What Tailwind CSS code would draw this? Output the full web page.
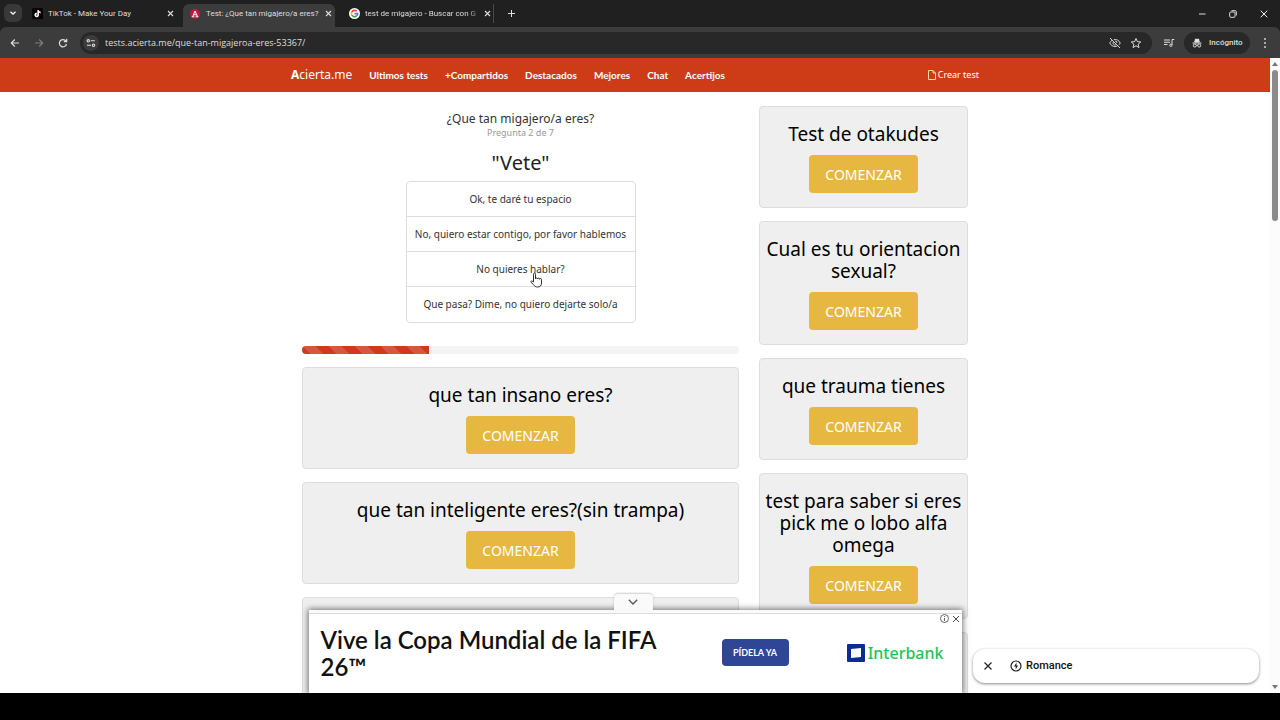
<!DOCTYPE html>
<html lang="es">
<head>
    <meta charset="UTF-8">
    <meta name="viewport" content="width=device-width, initial-scale=1.0">
    <title>Test: ¿Que tan migajero/a eres?</title>
    <script src="https://cdn.jsdelivr.net/npm/@tailwindcss/browser@4"></script>
</head>
<body class="h-screen flex flex-col overflow-hidden bg-black font-['Noto_Sans',sans-serif]">

    <!-- Browser window -->
    <header class="shrink-0 bg-[#202020] text-[#dedede] font-['Open_Sans',sans-serif]">
        <div class="flex h-[27px] pt-1 font-['Roboto',sans-serif] text-[8px]">
            <button aria-label="Buscar pestañas" class="ml-1 flex size-[18px] items-center justify-center rounded-md bg-[#393939]">
                <svg class="size-2" viewBox="0 0 8 8" fill="none" stroke="#fff" stroke-width="1.3"><path d="M1.5 2.8 4 5.2l2.5-2.4"/></svg>
            </button>
            <div class="ml-[3px] flex h-[19px] w-[158px] items-center pl-[7px]">
                <svg class="size-[11px] shrink-0" viewBox="0 0 22 22"><rect width="22" height="22" rx="3" fill="#000"/><g fill="none" stroke-width="2.6"><path d="M12 4v9.500a3 3 0 1 1-3-3M12 4c.4 2.800 2 4.200 4.500 4.500" stroke="#2ee"/><path d="M13 5v9.500a3 3 0 1 1-3-3M13 5c.4 2.800 2 4.200 4.500 4.500" stroke="#f25"/><path d="M12.500 4.500v9.500a3 3 0 1 1-3-3M12.500 4.500c.4 2.800 2 4.200 4.500 4.500" stroke="#fff"/></g></svg>
                <span class="ml-[5px] grow truncate">TikTok - Make Your Day</span>
                <button aria-label="Cerrar pestaña" class="mr-[9px]"><svg class="size-[7px]" viewBox="0 0 7 7" stroke="#ddd" stroke-width="1.1"><path d="m1 1 5 5M6 1 1 6"/></svg></button>
            </div>
            <div class="flex h-[23px] w-[152px] items-center rounded-t-md bg-[#3c3c3c] pb-1 pl-[7px]">
                <svg class="size-[10px] shrink-0" viewBox="0 0 20 20"><circle cx="10" cy="10" r="10" fill="#c8173f"/><path d="M3.500 15.500h5M11 15.500h6M5.500 15 10 4l5 11M7.500 11.500h5.500" fill="none" stroke="#fff" stroke-width="2"/></svg>
                <span class="ml-[6px] grow whitespace-nowrap">Test: ¿Que tan migajero/a eres?</span>
                <button aria-label="Cerrar pestaña" class="mr-[3px]"><svg class="size-[7px]" viewBox="0 0 7 7" stroke="#ddd" stroke-width="1.1"><path d="m1 1 5 5M6 1 1 6"/></svg></button>
            </div>
            <div class="flex h-[19px] w-[159px] items-center border-r border-[#484848] pl-[14px]">
                <svg class="size-[11px] shrink-0" viewBox="0 0 22 22" fill="none" stroke-width="3.200"><circle cx="11" cy="11" r="11" fill="#fff"/><path d="M15.500 6.500A6.300 6.300 0 0 0 5.500 8" stroke="#ea4335"/><path d="M5.500 8a6.300 6.300 0 0 0 0 6" stroke="#fbbc05"/><path d="M5.500 14a6.300 6.300 0 0 0 9.500 2" stroke="#34a853"/><path d="M15 16a6.300 6.300 0 0 0 2.300-4.700H11" stroke="#4285f4"/></svg>
                <span class="ml-[5px] grow whitespace-nowrap mask-r-from-85%">test de migajero - Buscar con G</span>
                <button aria-label="Cerrar pestaña" class="mr-[2px]"><svg class="size-[7px]" viewBox="0 0 7 7" stroke="#ddd" stroke-width="1.1"><path d="m1 1 5 5M6 1 1 6"/></svg></button>
            </div>
            <button aria-label="Nueva pestaña" class="ml-3.5 flex h-[19px] items-center"><svg class="size-[7px]" viewBox="0 0 7 7" stroke="#ddd" stroke-width="1"><path d="M3.500 0v7M0 3.500h7"/></svg></button>
            <div class="ml-auto mr-3 flex h-[19px] items-center gap-[23px]">
                <button aria-label="Minimizar"><svg class="size-2" viewBox="0 0 8 8" stroke="#ddd"><path d="M1 4h6.500"/></svg></button>
                <button aria-label="Restaurar"><svg class="size-2" viewBox="0 0 8 8" fill="none" stroke="#ddd"><rect x=".7" y="2" width="5.300" height="5.300" rx="1"/><path d="M2.500.7h3.800a1 1 0 0 1 1 1v3.800"/></svg></button>
                <button aria-label="Cerrar"><svg class="size-2" viewBox="0 0 8 8" stroke="#eee"><path d="m.7.7 6.600 6.600M7.300.7.7 7.300"/></svg></button>
            </div>
        </div>

        <div class="flex h-[31px] items-center rounded-t-md bg-[#3c3c3c] text-[9px]">
            <button aria-label="Atrás" class="ml-2.5"><svg class="size-[10px]" viewBox="0 0 10 10" fill="none" stroke="#ddd" stroke-width="1.2"><path d="M9 5H1.500M4.800 1.500 1.300 5l3.500 3.500"/></svg></button>
            <button aria-label="Adelante" class="ml-3.5"><svg class="size-[10px]" viewBox="0 0 10 10" fill="none" stroke="#7d7d7d" stroke-width="1.2"><path d="M1 5h7.500M5.200 1.500 8.700 5 5.200 8.500"/></svg></button>
            <button aria-label="Recargar" class="ml-3.5"><svg class="size-[10px]" viewBox="0 0 10 10" fill="none" stroke="#ddd" stroke-width="1.200"><path d="M8.500 6A3.600 3.600 0 1 1 8 3.200M8.700.8v2.900H5.800"/></svg></button>
            <div class="ml-3 flex h-[22px] grow items-center rounded-full bg-[#282828]">
                <button aria-label="Información del sitio" class="ml-[3px] flex size-4 items-center justify-center rounded-full bg-[#3c3c3c]">
                    <svg class="size-[10px]" viewBox="0 0 10 10" fill="none" stroke="#ddd" stroke-width="1.100"><circle cx="2.300" cy="2.800" r="1.200"/><path d="M4.800 2.800h4M1 7.200h4"/><circle cx="7.500" cy="7.200" r="1.200"/></svg>
                </button>
                <input type="text" aria-label="Dirección" value="tests.acierta.me/que-tan-migajeroa-eres-53367/" class="ml-1.5 grow bg-transparent outline-none">
                <svg class="size-3" viewBox="0 0 24 24" fill="none" stroke="#d5d5d5" stroke-width="2"><path d="M2 2l20 20M6 6.500C4 8 2.500 10 1.500 12c2 4.300 6 7 10.500 7 1.800 0 3.500-.4 5-1.200M9.500 5.300C14.500 4 20 6.500 22.500 12c-.6 1.300-1.400 2.500-2.400 3.500M8.500 10a4 4 0 0 0 5.300 5.500M12 8a4 4 0 0 1 4 4"/></svg>
                <svg class="ml-[9px] mr-[10px] size-3" viewBox="0 0 24 24" fill="none" stroke="#ddd" stroke-width="2"><path d="m12 3 2.700 6.300 6.800.6-5.200 4.500 1.600 6.700L12 17.500l-5.900 3.600 1.600-6.700-5.200-4.500 6.800-.6z"/></svg>
            </div>
            <svg class="ml-[11px] size-3" viewBox="0 0 24 24" fill="none" stroke="#ddd" stroke-width="2"><path d="M2 6h12M2 10.500h12M2 15h7M22.500 5H18v11"/><circle cx="15.700" cy="16.500" r="2.300"/></svg>
            <button class="ml-[9px] flex h-[22px] w-[66px] items-center rounded-full bg-[#282828] pl-2 font-['Roboto',sans-serif] text-[8px] font-medium">
                <svg class="mr-[7px] size-[10px]" viewBox="0 0 20 20" stroke="#e5e5e5" stroke-width="2" fill="none"><path d="M5.500 8 7 2l3 1 3-1 1.500 6z" fill="#e5e5e5"/><path d="M1 10h18"/><circle cx="5.500" cy="15" r="3"/><circle cx="14.500" cy="15" r="3"/><path d="M8.500 14.500q1.500-1 3 0"/></svg>
                Incógnito
            </button>
            <button aria-label="Menú" class="ml-[13px] mr-[13px]"><svg class="h-2.5 w-1" viewBox="0 0 4 10" fill="#ddd"><circle cx="2" cy="1" r=".9"/><circle cx="2" cy="5" r=".9"/><circle cx="2" cy="9" r=".9"/></svg></button>
        </div>
    </header>

    <!-- Page -->
    <div class="flex min-h-0 grow bg-white">
        <div class="relative grow overflow-hidden">
            <nav class="h-[34px] bg-[#cd3c17] text-white">
                <div class="mx-auto flex h-full max-w-[688px] items-center gap-[17px] font-['Lato',sans-serif] text-[10px]">
                    <a href="#" class="font-['Noto_Sans',sans-serif] text-[12px]"><b>A</b>cierta.me</a>
                    <a href="#" class="font-bold">Ultimos tests</a>
                    <a href="#" class="font-bold">+Compartidos</a>
                    <a href="#" class="font-bold">Destacados</a>
                    <a href="#" class="font-bold">Mejores</a>
                    <a href="#" class="font-bold">Chat</a>
                    <a href="#" class="font-bold">Acertijos</a>
                    <a href="#" class="ml-auto flex items-center gap-0.5 font-['Noto_Sans',sans-serif] text-[9px]">
                        <svg class="h-[10px] w-2" viewBox="0 0 8 10" fill="none" stroke="#fbd9a0"><path d="M.5.500h4.500l2.500 2.500v6.500H.500zM5 .500v2.500h2.500"/></svg>
                        Crear test
                    </a>
                </div>
            </nav>

            <div class="mx-auto flex max-w-[666px] items-start gap-5 pt-[14px]">
                <main class="min-w-0 grow text-center">
                    <h2 class="pt-[5px] text-[12px] leading-4 text-[#333]">¿Que tan migajero/a eres?</h2>
                    <p class="text-[9px] leading-3 text-[#999]">Pregunta 2 de 7</p>
                    <h1 class="mt-3 text-[20px] leading-6 text-[#222]">"Vete"</h1>
                    <div class="mx-auto mt-1.5 w-[230px] divide-y divide-[#ddd] rounded border border-[#ddd] text-[10px] text-[#333]">
                        <button class="block h-[35px] w-full">Ok, te daré tu espacio</button>
                        <button class="block h-[35px] w-full">No, quiero estar contigo, por favor hablemos</button>
                        <button class="relative block h-[35px] w-full">
                            No quieres hablar?
                            <svg class="absolute left-[123px] top-[20px] h-4 w-3" viewBox="0 0 12 16" fill="#fff" stroke="#333" stroke-linejoin="round"><path d="M3.500 10V2.200a1 1 0 0 1 2 0V7a1 1 0 0 1 2 0 1 1 0 0 1 2 .3 1 1 0 0 1 2 .4V11c0 2.500-1.300 4-3.800 4-2.200 0-3.200-.8-4.200-2.400L1 10.200c-.5-1 .6-1.700 1.300-1z"/></svg>
                        </button>
                        <button class="block h-[35px] w-full">Que pasa? Dime, no quiero dejarte solo/a</button>
                    </div>
                    <div role="progressbar" aria-label="Progreso" aria-valuenow="29" class="mb-[13px] mt-[23px] h-2 overflow-hidden rounded bg-[#f4f4f4]">
                        <div class="h-full bg-[#cd3c17] bg-[linear-gradient(45deg,#ffffff26_25%,transparent_25%,transparent_50%,#ffffff26_50%,#ffffff26_75%,transparent_75%)] bg-size-[26px_26px]" style="width: 29%"></div>
                    </div>
                    <div class="flex flex-col gap-[13px]">
                        <section class="rounded border border-[#ddd] bg-[#efefef] pb-[14px] pt-4">
                            <h3 class="mb-[10px] text-[19px] leading-[22px]">que tan insano eres?</h3>
                            <button class="h-[38px] w-[109px] rounded bg-[#e6b842] text-[14px] text-white">COMENZAR</button>
                        </section>
                        <section class="rounded border border-[#ddd] bg-[#efefef] pb-[14px] pt-4">
                            <h3 class="mb-[10px] text-[19px] leading-[22px]">que tan inteligente eres?(sin trampa)</h3>
                            <button class="h-[38px] w-[109px] rounded bg-[#e6b842] text-[14px] text-white">COMENZAR</button>
                        </section>
                        <section class="h-[102px] rounded border border-[#ddd] bg-[#efefef]"></section>
                    </div>
                </main>

                <aside class="flex w-[209px] shrink-0 flex-col gap-[13px] text-center">
                    <section class="rounded border border-[#ddd] bg-[#efefef] pb-[14px] pt-4">
                        <h3 class="mb-[10px] text-[19px] leading-[22px]">Test de otakudes</h3>
                        <button class="h-[38px] w-[109px] rounded bg-[#e6b842] text-[14px] text-white">COMENZAR</button>
                    </section>
                    <section class="rounded border border-[#ddd] bg-[#efefef] pb-[14px] pt-4">
                        <h3 class="mb-[10px] text-[19px] leading-[22px]">Cual es tu orientacion sexual?</h3>
                        <button class="h-[38px] w-[109px] rounded bg-[#e6b842] text-[14px] text-white">COMENZAR</button>
                    </section>
                    <section class="rounded border border-[#ddd] bg-[#efefef] pb-[14px] pt-4">
                        <h3 class="mb-[10px] text-[19px] leading-[22px]">que trauma tienes</h3>
                        <button class="h-[38px] w-[109px] rounded bg-[#e6b842] text-[14px] text-white">COMENZAR</button>
                    </section>
                    <section class="rounded border border-[#ddd] bg-[#efefef] pb-[14px] pt-4">
                        <h3 class="mb-[10px] text-[19px] leading-[22px]">test para saber si eres pick me o lobo alfa omega</h3>
                        <button class="h-[38px] w-[109px] rounded bg-[#e6b842] text-[14px] text-white">COMENZAR</button>
                    </section>
                    <section class="h-[102px] rounded border border-[#ddd] bg-[#efefef]"></section>
                </aside>
            </div>

            <!-- Anchor ad -->
            <div class="absolute inset-x-0 bottom-0 mx-auto h-[83px] max-w-[653px] bg-[#fafafa] pt-[3px] shadow-[0_0_6px_1px_#00000088]">
                <button aria-label="Ocultar anuncio" class="absolute -top-4 left-[305px] flex h-4 w-[39px] items-center justify-center rounded-t bg-[#fafafa] shadow-[0_-1px_2px_#00000033]">
                    <svg class="h-1.5 w-2.5" viewBox="0 0 10 6" fill="none" stroke="#555" stroke-width="1.300"><path d="m.8.8 4.200 4.200L9.200.8"/></svg>
                </button>
                <div class="flex h-full items-center border-t border-[#ddd] bg-white pb-0.5 pl-3 pr-[18px]">
                    <p class="w-[360px] font-['Lato',sans-serif] text-[24px] font-semibold leading-[27px] text-[#111]">Vive la Copa Mundial de la FIFA 26™</p>
                    <button class="ml-[41px] h-[27px] w-[67px] rounded-sm bg-[#2f4697] font-['Lato',sans-serif] text-[9px] font-bold text-white">PÍDELA YA</button>
                    <a href="#" class="ml-auto flex items-center gap-[3px] text-[16px] font-medium leading-5 text-[#22c55a]">
                        <svg class="size-[18px]" viewBox="0 0 18 18"><rect width="18" height="18" rx="1" fill="#0a2d93"/><path d="m4 5 10-1v9L4 14z" fill="#fff"/></svg>
                        Interbank
                    </a>
                </div>
                <div class="absolute right-[2px] top-1 flex items-center gap-[3px]">
                    <svg class="size-[9px]" viewBox="0 0 9 9" fill="none" stroke="#555" stroke-width=".9"><circle cx="4.500" cy="4.500" r="4"/><path d="M4.500 2v1M4.500 4v3"/></svg>
                    <button aria-label="Cerrar anuncio"><svg class="size-2" viewBox="0 0 8 8" stroke="#444"><path d="m1 1 6 6M7 1 1 7"/></svg></button>
                </div>
            </div>

            <div class="absolute bottom-[10px] right-[11px] flex h-[34px] w-[286px] items-center rounded-xl bg-white pl-[11px] font-['Roboto',sans-serif] text-[11px] font-medium text-[#111] shadow-[0_1px_3px_#00000077]">
                <button aria-label="Cerrar"><svg class="size-2" viewBox="0 0 8 8" stroke="#222" stroke-width="1.200"><path d="m.5.500 7 7M7.500.500l-7 7"/></svg></button>
                <svg class="ml-[18px] mr-1 size-3" viewBox="0 0 12 12" fill="none" stroke="#222" stroke-width="1.200"><circle cx="6" cy="6" r="5"/><path d="M6.500 2.500 4 6.500h1.700v3L8 5.500H6.500z" fill="#222" stroke="none"/></svg>
                <a href="#">Romance</a>
            </div>
        </div>

        <!-- Scrollbar -->
        <div class="flex w-[10px] shrink-0 flex-col items-center bg-[#fcfcfc] py-1">
            <svg class="h-1 w-1.5" viewBox="0 0 6 4" fill="#777"><path d="M3 0l3 4H0z"/></svg>
            <div class="mt-1 h-[151px] w-1.5 rounded-full bg-[#8b8b8b]"></div>
            <svg class="mt-auto h-1 w-1.5" viewBox="0 0 6 4" fill="#777"><path d="M3 4l3-4H0z"/></svg>
        </div>
    </div>

    <footer class="h-[27px] shrink-0 bg-black"></footer>
</body>
</html>
